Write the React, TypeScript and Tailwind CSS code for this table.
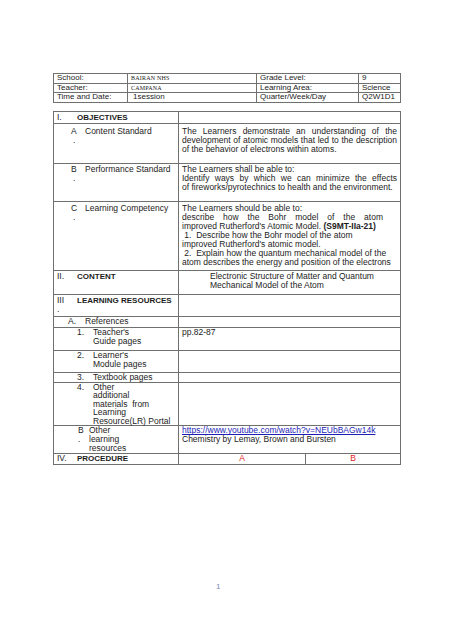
import React from "react";

const font = { fontFamily: '"Liberation Sans", Arial, sans-serif' };

// one justified line that stretches to the cell edge
const J = ({ children }: { children: React.ReactNode }) => (
  <div className="text-justify [text-align-last:justify]">{children}</div>
);

const headRows = [
  ["School:", "BAIRAN NHS", "Grade Level:", "9"],
  ["Teacher:", "CAMPANA", "Learning Area:", "Science"],
  ["Time and Date:", "1session", "Quarter/Week/Day", "Q2W1D1"],
];

const cell = "border border-[#707070] align-top px-[3px] py-0";

const App: React.FC = () => {
  return (
    <div className="min-h-[640px] w-[453px] bg-white text-[#1c1c1c] text-[8px] leading-[9px]" style={font}>
      <div className="pl-[53px] pt-[73px]">
        {/* Header table */}
        <table className="table-fixed border-collapse w-[347px] leading-[8.5px]">
          <colgroup>
            <col className="w-[74px]" />
            <col className="w-[129px]" />
            <col className="w-[102px]" />
            <col className="w-[42px]" />
          </colgroup>
          <tbody>
            {headRows.map((r, i) => (
              <tr key={i} className="h-[9px]">
                <td className={cell}>{r[0]}</td>
                <td className={cell}>
                  {i < 2 ? (
                    <span className="text-[6px] tracking-[0.2px]" style={{ fontFamily: '"Liberation Serif", serif' }}>
                      {r[1]}
                    </span>
                  ) : (
                    <span className="pl-[2px]">{r[1]}</span>
                  )}
                </td>
                <td className={cell}>{r[2]}</td>
                <td className={cell}>{r[3]}</td>
              </tr>
            ))}
          </tbody>
        </table>

        {/* Main table */}
        <table className="table-fixed border-collapse w-[347px] mt-[8px] text-[8.5px] leading-[9px]">
          <colgroup>
            <col className="w-[125px]" />
            <col className="w-[127px]" />
            <col className="w-[95px]" />
          </colgroup>
          <tbody>
            <tr className="h-[12px]">
              <td className={cell}>
                <div className="flex pt-[1px]">
                  <span className="w-[20px]">I.</span>
                  <span className="font-bold text-[8px]">OBJECTIVES</span>
                </div>
              </td>
              <td className={cell} colSpan={2}></td>
            </tr>

            <tr className="h-[40px]">
              <td className={cell}>
                <div className="flex pl-[14px] pt-[3px]">
                  <div className="w-[14px]">
                    <div>A</div>
                    <div className="pl-[2px]">.</div>
                  </div>
                  <span>Content Standard</span>
                </div>
              </td>
              <td className={cell} colSpan={2}>
                <div className="pt-[3px]">
                  <J>The Learners demonstrate an understanding of the</J>
                  <J>development of atomic models that led to the description</J>
                  <div>of the behavior of electrons within atoms.</div>
                </div>
              </td>
            </tr>

            <tr className="h-[38px]">
              <td className={cell}>
                <div className="flex pl-[14px] pt-[1px]">
                  <div className="w-[14px]">
                    <div>B</div>
                    <div className="pl-[2px]">.</div>
                  </div>
                  <span>Performance Standard</span>
                </div>
              </td>
              <td className={cell} colSpan={2}>
                <div className="pt-[1px]">
                  <div>The Learners shall be able to:</div>
                  <J>Identify ways by which we can minimize the effects</J>
                  <div className="whitespace-nowrap">of fireworks/pyrotechnics to health and the environment.</div>
                </div>
              </td>
            </tr>

            <tr className="h-[69px]">
              <td className={cell}>
                <div className="flex pl-[14px] pt-[2px]">
                  <div className="w-[14px]">
                    <div>C</div>
                    <div className="pl-[2px]">.</div>
                  </div>
                  <span>Learning Competency</span>
                </div>
              </td>
              <td className={cell} colSpan={2}>
                <div className="pt-[2px] whitespace-pre">
                  <div>The Learners should be able to:</div>
                  <div className="w-[201px]">
                    <J>describe how the Bohr model of the atom</J>
                  </div>
                  <div>
                    improved Rutherford's Atomic Model. <span className="font-bold">(S9MT-IIa-21)</span>
                  </div>
                  <div> 1.  Describe how the Bohr model of the atom</div>
                  <div>improved Rutherford's atomic model.</div>
                  <div> 2.  Explain how the quantum mechanical model of the</div>
                  <div>atom describes the energy and position of the electrons</div>
                </div>
              </td>
            </tr>

            <tr className="h-[24px]">
              <td className={cell}>
                <div className="flex pt-[1px]">
                  <span className="w-[20px]">II.</span>
                  <span className="font-bold text-[8px]">CONTENT</span>
                </div>
              </td>
              <td className={cell} colSpan={2}>
                <div className="pl-[28px] pt-[1px]">
                  <div>Electronic Structure of Matter and Quantum</div>
                  <div>Mechanical Model of the Atom</div>
                </div>
              </td>
            </tr>

            <tr className="h-[22px]">
              <td className={cell}>
                <div className="flex pt-[1px]">
                  <div className="w-[20px] shrink-0">
                    <div>III</div>
                    <div>.</div>
                  </div>
                  <span className="font-bold text-[8px] whitespace-nowrap">LEARNING RESOURCES</span>
                </div>
              </td>
              <td className={cell} colSpan={2}></td>
            </tr>

            <tr className="h-[11px]">
              <td className={cell}>
                <div className="flex pl-[11px]">
                  <span className="w-[17px]">A.</span>
                  <span>References</span>
                </div>
              </td>
              <td className={cell} colSpan={2}></td>
            </tr>

            <tr className="h-[23px]">
              <td className={cell}>
                <div className="flex pl-[20px]">
                  <span className="w-[16px]">1.</span>
                  <div>
                    <div>Teacher's</div>
                    <div>Guide pages</div>
                  </div>
                </div>
              </td>
              <td className={cell} colSpan={2}>pp.82-87</td>
            </tr>

            <tr className="h-[22px]">
              <td className={cell}>
                <div className="flex pl-[20px]">
                  <span className="w-[16px]">2.</span>
                  <div>
                    <div>Learner's</div>
                    <div>Module pages</div>
                  </div>
                </div>
              </td>
              <td className={cell} colSpan={2}></td>
            </tr>

            <tr className="h-[10px]">
              <td className={cell}>
                <div className="flex pl-[20px]">
                  <span className="w-[16px]">3.</span>
                  <span>Textbook pages</span>
                </div>
              </td>
              <td className={cell} colSpan={2}></td>
            </tr>

            <tr className="h-[43px]">
              <td className={cell}>
                <div className="flex pl-[20px]">
                  <span className="w-[16px]">4.</span>
                  <div className="leading-[8.6px]">
                    <div>Other</div>
                    <div>additional</div>
                    <div className="whitespace-pre">materials  from</div>
                    <div>Learning</div>
                    <div>Resource(LR) Portal</div>
                  </div>
                </div>
              </td>
              <td className={cell} colSpan={2}></td>
            </tr>

            <tr className="h-[27px]">
              <td className={cell}>
                <div className="flex pl-[21px]">
                  <div className="w-[11px]">
                    <div>B</div>
                    <div>.</div>
                  </div>
                  <div>
                    <div>Other</div>
                    <div>learning</div>
                    <div>resources</div>
                  </div>
                </div>
              </td>
              <td className={cell} colSpan={2}>
                <div className="text-[#1f1fb8] underline">https://www.youtube.com/watch?v=NEUbBAGw14k</div>
                <div>Chemistry by Lemay, Brown and Bursten</div>
              </td>
            </tr>

            <tr className="h-[11px]">
              <td className={cell}>
                <div className="flex">
                  <span className="w-[20px]">IV.</span>
                  <span className="font-bold text-[8px]">PROCEDURE</span>
                </div>
              </td>
              <td className={`${cell} text-center text-[#e02020]`}>A</td>
              <td className={`${cell} text-center text-[#e02020]`}>B</td>
            </tr>
          </tbody>
        </table>
      </div>

      {/* Page number */}
      <div className="mt-[117px] pl-[216px] text-[8px] text-[#7d8db3]">1</div>
    </div>
  );
};

export default App;
